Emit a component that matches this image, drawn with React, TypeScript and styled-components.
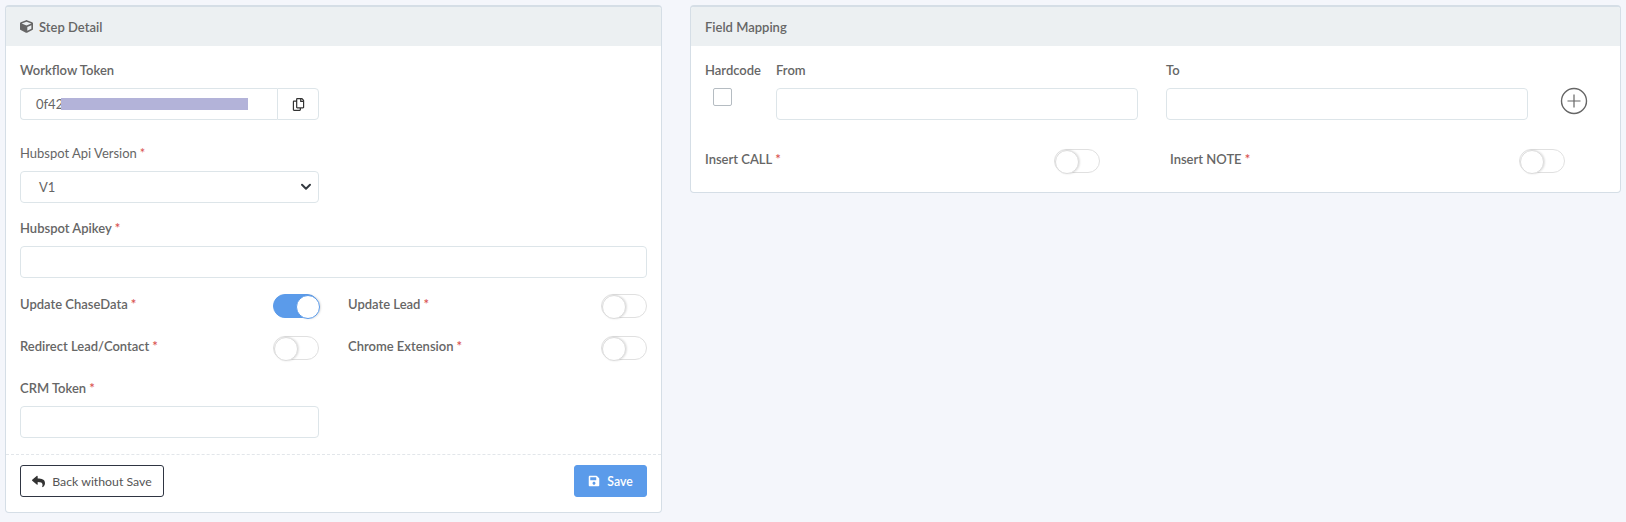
import React from "react";
import styled, { createGlobalStyle } from "styled-components";
import { FaCube, FaRegCopy, FaReply, FaSave } from "react-icons/fa";

const GlobalStyle = createGlobalStyle`
  html, body {
    margin: 0;
    background: #f4f6fb;
    font-family: Lato, "Noto Sans", sans-serif;
    font-size: 13px;
    color: #666;
  }
  * { box-sizing: border-box; }
`;

const Page = styled.div`
  width: 1626px;
  height: 522px;
  padding: 5px 5px 0 5px;
  display: grid;
  grid-template-columns: 657px 931px;
  column-gap: 28px;
  align-items: start;
  overflow: hidden;
`;

const Card = styled.section`
  background: #fff;
  border: 1px solid #d5dee6;
  border-top-width: 2px;
  border-radius: 4px;
  overflow: hidden;
`;

const CardHeader = styled.header`
  height: 39px;
  background: #ecf0f2;
  padding: 0 14px;
  display: flex;
  align-items: center;
  gap: 6px;
  font-size: 13px;
  font-weight: 600;
  color: #666;
`;

const DetailBody = styled.div`
  padding: 15px 14px 16px;
`;

const Label = styled.div<{ $regular?: boolean }>`
  font-size: 13px;
  line-height: 18px;
  font-weight: ${(p) => (p.$regular ? 400 : 600)};
  color: #666;
`;

const Star = styled.span`
  color: #d9534f;
  margin-left: 3px;
`;

const baseField = `
  height: 32px;
  border: 1px solid #dde5e9;
  border-radius: 4px;
  background: #fff;
`;

const TokenGroup = styled.div`
  margin-top: 9px;
  width: 299px;
  display: flex;
`;

const TokenField = styled.div`
  ${baseField}
  flex: 1;
  border-radius: 4px 0 0 4px;
  border-right: 0;
  padding-left: 15px;
  display: flex;
  align-items: center;
  color: #666;
`;

const Redacted = styled.span`
  display: inline-block;
  width: 187px;
  height: 12px;
  margin-left: -2px;
  background: #b3b3d9;
`;

const CopyButton = styled.div`
  ${baseField}
  width: 42px;
  border-radius: 0 4px 4px 0;
  display: flex;
  align-items: center;
  justify-content: center;
  color: #333;
  font-size: 13px;
`;

const Group = styled.div<{ $top: number }>`
  margin-top: ${(p) => p.$top}px;
`;

const SelectField = styled.div`
  ${baseField}
  margin-top: 9px;
  width: 299px;
  padding: 0 6px 0 18px;
  display: flex;
  align-items: center;
  justify-content: space-between;
  color: #666;
`;

const Input = styled.div<{ $width?: number }>`
  ${baseField}
  margin-top: 9px;
  width: ${(p) => (p.$width ? `${p.$width}px` : "100%")};
`;

const ToggleGrid = styled.div`
  margin-top: 16px;
  display: grid;
  grid-template-columns: 299px 299px;
  column-gap: 29px;
  row-gap: 18px;
`;

const ToggleRow = styled.div`
  display: flex;
  align-items: flex-start;
  justify-content: space-between;
  height: 24px;
`;

const ToggleLabel = styled(Label)`
  padding-top: 1px;
`;

const Switch = styled.div<{ $on?: boolean }>`
  position: relative;
  width: 46px;
  height: 24px;
  border-radius: 12px;
  border: 1px solid ${(p) => (p.$on ? "#5b9bea" : "#e0e0e0")};
  background: ${(p) => (p.$on ? "#5b9bea" : "#fff")};
  flex: none;

  &::after {
    content: "";
    position: absolute;
    top: 0;
    left: ${(p) => (p.$on ? "22px" : "0")};
    width: 22px;
    height: 22px;
    border-radius: 50%;
    background: #fff;
    border: 1px solid ${(p) => (p.$on ? "#5b9bea" : "#dcdcdc")};
    box-shadow: 1px 0 2px rgba(0, 0, 0, 0.12);
  }
`;

const Footer = styled.footer`
  border-top: 1px dashed #e2e6ea;
  padding: 10px 14px 15px;
  display: flex;
  justify-content: space-between;
`;

const Button = styled.div<{ $primary?: boolean; $width: number }>`
  width: ${(p) => p.$width}px;
  height: 32px;
  border-radius: 3px;
  border: 1px solid ${(p) => (p.$primary ? "#5b9bea" : "#2f3542")};
  background: ${(p) => (p.$primary ? "#5b9bea" : "#fff")};
  color: ${(p) => (p.$primary ? "#fff" : "#555")};
  display: flex;
  align-items: center;
  justify-content: center;
  gap: 7px;
  font-size: 12.3px;
  font-weight: ${(p) => (p.$primary ? 600 : 400)};
`;

const MappingBody = styled.div`
  padding: 15px 14px 0;
  height: 146px;
`;

const MappingGrid = styled.div`
  display: grid;
  grid-template-columns: 43px 362px 362px 1fr;
  column-gap: 28px;
`;

const Check = styled.div`
  width: 19px;
  height: 18px;
  margin: 9px 0 0 8px;
  border: 1px solid #b5bcc2;
  border-radius: 2px;
  background: #fff;
`;

const HardcodeLabel = styled(Label)`
  white-space: nowrap;
`;

const PlusCell = styled.div`
  padding: 26px 0 0 4px;
  svg { display: block; }
`;

const InsertGrid = styled.div`
  margin-top: 29px;
  display: grid;
  grid-template-columns: 395px 395px;
  column-gap: 70px;
`;

function Required({ children }: { children: React.ReactNode }) {
  return (
    <Label>
      {children}
      <Star>*</Star>
    </Label>
  );
}

function ToggleItem({ label, on }: { label: string; on?: boolean }) {
  return (
    <ToggleRow>
      <ToggleLabel>
        {label}
        <Star>*</Star>
      </ToggleLabel>
      <Switch $on={on} />
    </ToggleRow>
  );
}

export default function App() {
  return (
    <>
      <GlobalStyle />
      <Page>
        <Card>
          <CardHeader>
            <FaCube size={13} />
            Step Detail
          </CardHeader>
          <DetailBody>
            <Label>Workflow Token</Label>
            <TokenGroup>
              <TokenField>
                0f42
                <Redacted />
              </TokenField>
              <CopyButton>
                <FaRegCopy />
              </CopyButton>
            </TokenGroup>
            <Group $top={24}>
              <Label $regular>
                Hubspot Api Version<Star>*</Star>
              </Label>
              <SelectField>
                V1
                <svg width="12" height="8" viewBox="0 0 12 8" fill="none">
                  <path d="M2 1.8 6 5.8l4-4" stroke="#343a40" strokeWidth="2" strokeLinecap="round" strokeLinejoin="round" />
                </svg>
              </SelectField>
            </Group>
            <Group $top={16}>
              <Required>Hubspot Apikey</Required>
              <Input />
            </Group>
            <ToggleGrid>
              <ToggleItem label="Update ChaseData" on />
              <ToggleItem label="Update Lead" />
              <ToggleItem label="Redirect Lead/Contact" />
              <ToggleItem label="Chrome Extension" />
            </ToggleGrid>
            <Group $top={19}>
              <Required>CRM Token</Required>
              <Input $width={299} />
            </Group>
          </DetailBody>
          <Footer>
            <Button $width={144}>
              <FaReply size={13} color="#333" />
              Back without Save
            </Button>
            <Button $primary $width={73}>
              <FaSave size={12} />
              Save
            </Button>
          </Footer>
        </Card>
        <Card>
          <CardHeader>Field Mapping</CardHeader>
          <MappingBody>
            <MappingGrid>
              <div>
                <HardcodeLabel>Hardcode</HardcodeLabel>
                <Check />
              </div>
              <div>
                <Label>From</Label>
                <Input />
              </div>
              <div>
                <Label>To</Label>
                <Input />
              </div>
              <PlusCell>
                <svg width="28" height="28" viewBox="0 0 28 28" fill="none" stroke="#666">
                  <circle cx="14" cy="14" r="12.5" strokeWidth="1.4" />
                  <path d="M14 7.5v13M7.5 14h13" strokeWidth="1.2" />
                </svg>
              </PlusCell>
            </MappingGrid>
            <InsertGrid>
              <ToggleItem label="Insert CALL" />
              <ToggleItem label="Insert NOTE" />
            </InsertGrid>
          </MappingBody>
        </Card>
      </Page>
    </>
  );
}
